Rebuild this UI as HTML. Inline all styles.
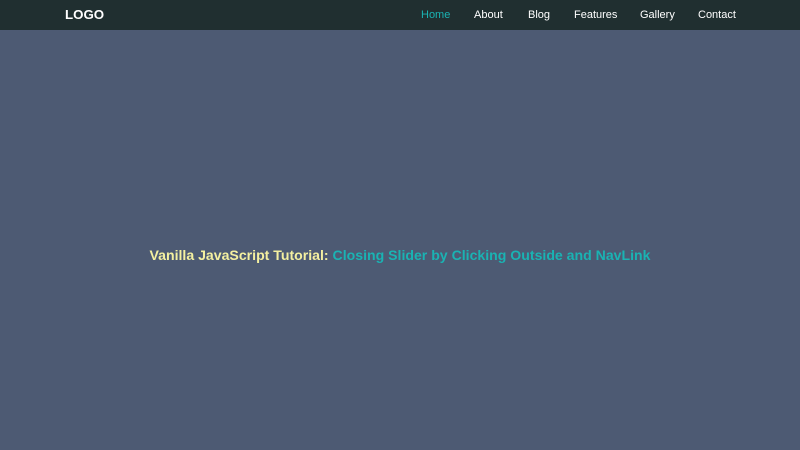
<!DOCTYPE html>
<html><head><style>
body{margin:0;width:800px;height:450px;background:#4d5a73;font-family:"Liberation Sans",sans-serif;overflow:hidden;position:relative}
.h{position:absolute;left:0;top:0;width:800px;height:30px;background:#202f30}
.logo{position:absolute;left:65px;top:7px;color:#fff;font-weight:bold;font-size:13.3px}
.n{position:absolute;top:9px;color:#fff;font-size:11px;white-space:nowrap}
.t{position:absolute;left:0;width:800px;top:247px;text-align:center;font-weight:bold;font-size:14.1px;white-space:nowrap}
</style></head><body>
<div class="h">
<div class="logo">LOGO</div>
<div class="n" style="left:421px;color:#1ab3b3">Home</div>
<div class="n" style="left:474px">About</div>
<div class="n" style="left:528px">Blog</div>
<div class="n" style="left:574px">Features</div>
<div class="n" style="left:640px">Gallery</div>
<div class="n" style="left:698px">Contact</div>
</div>
<div class="t"><span style="color:#f4f0a0">Vanilla JavaScript Tutorial:</span> <span style="color:#1ab3b3">Closing Slider by Clicking Outside and NavLink</span></div>
</body></html>
